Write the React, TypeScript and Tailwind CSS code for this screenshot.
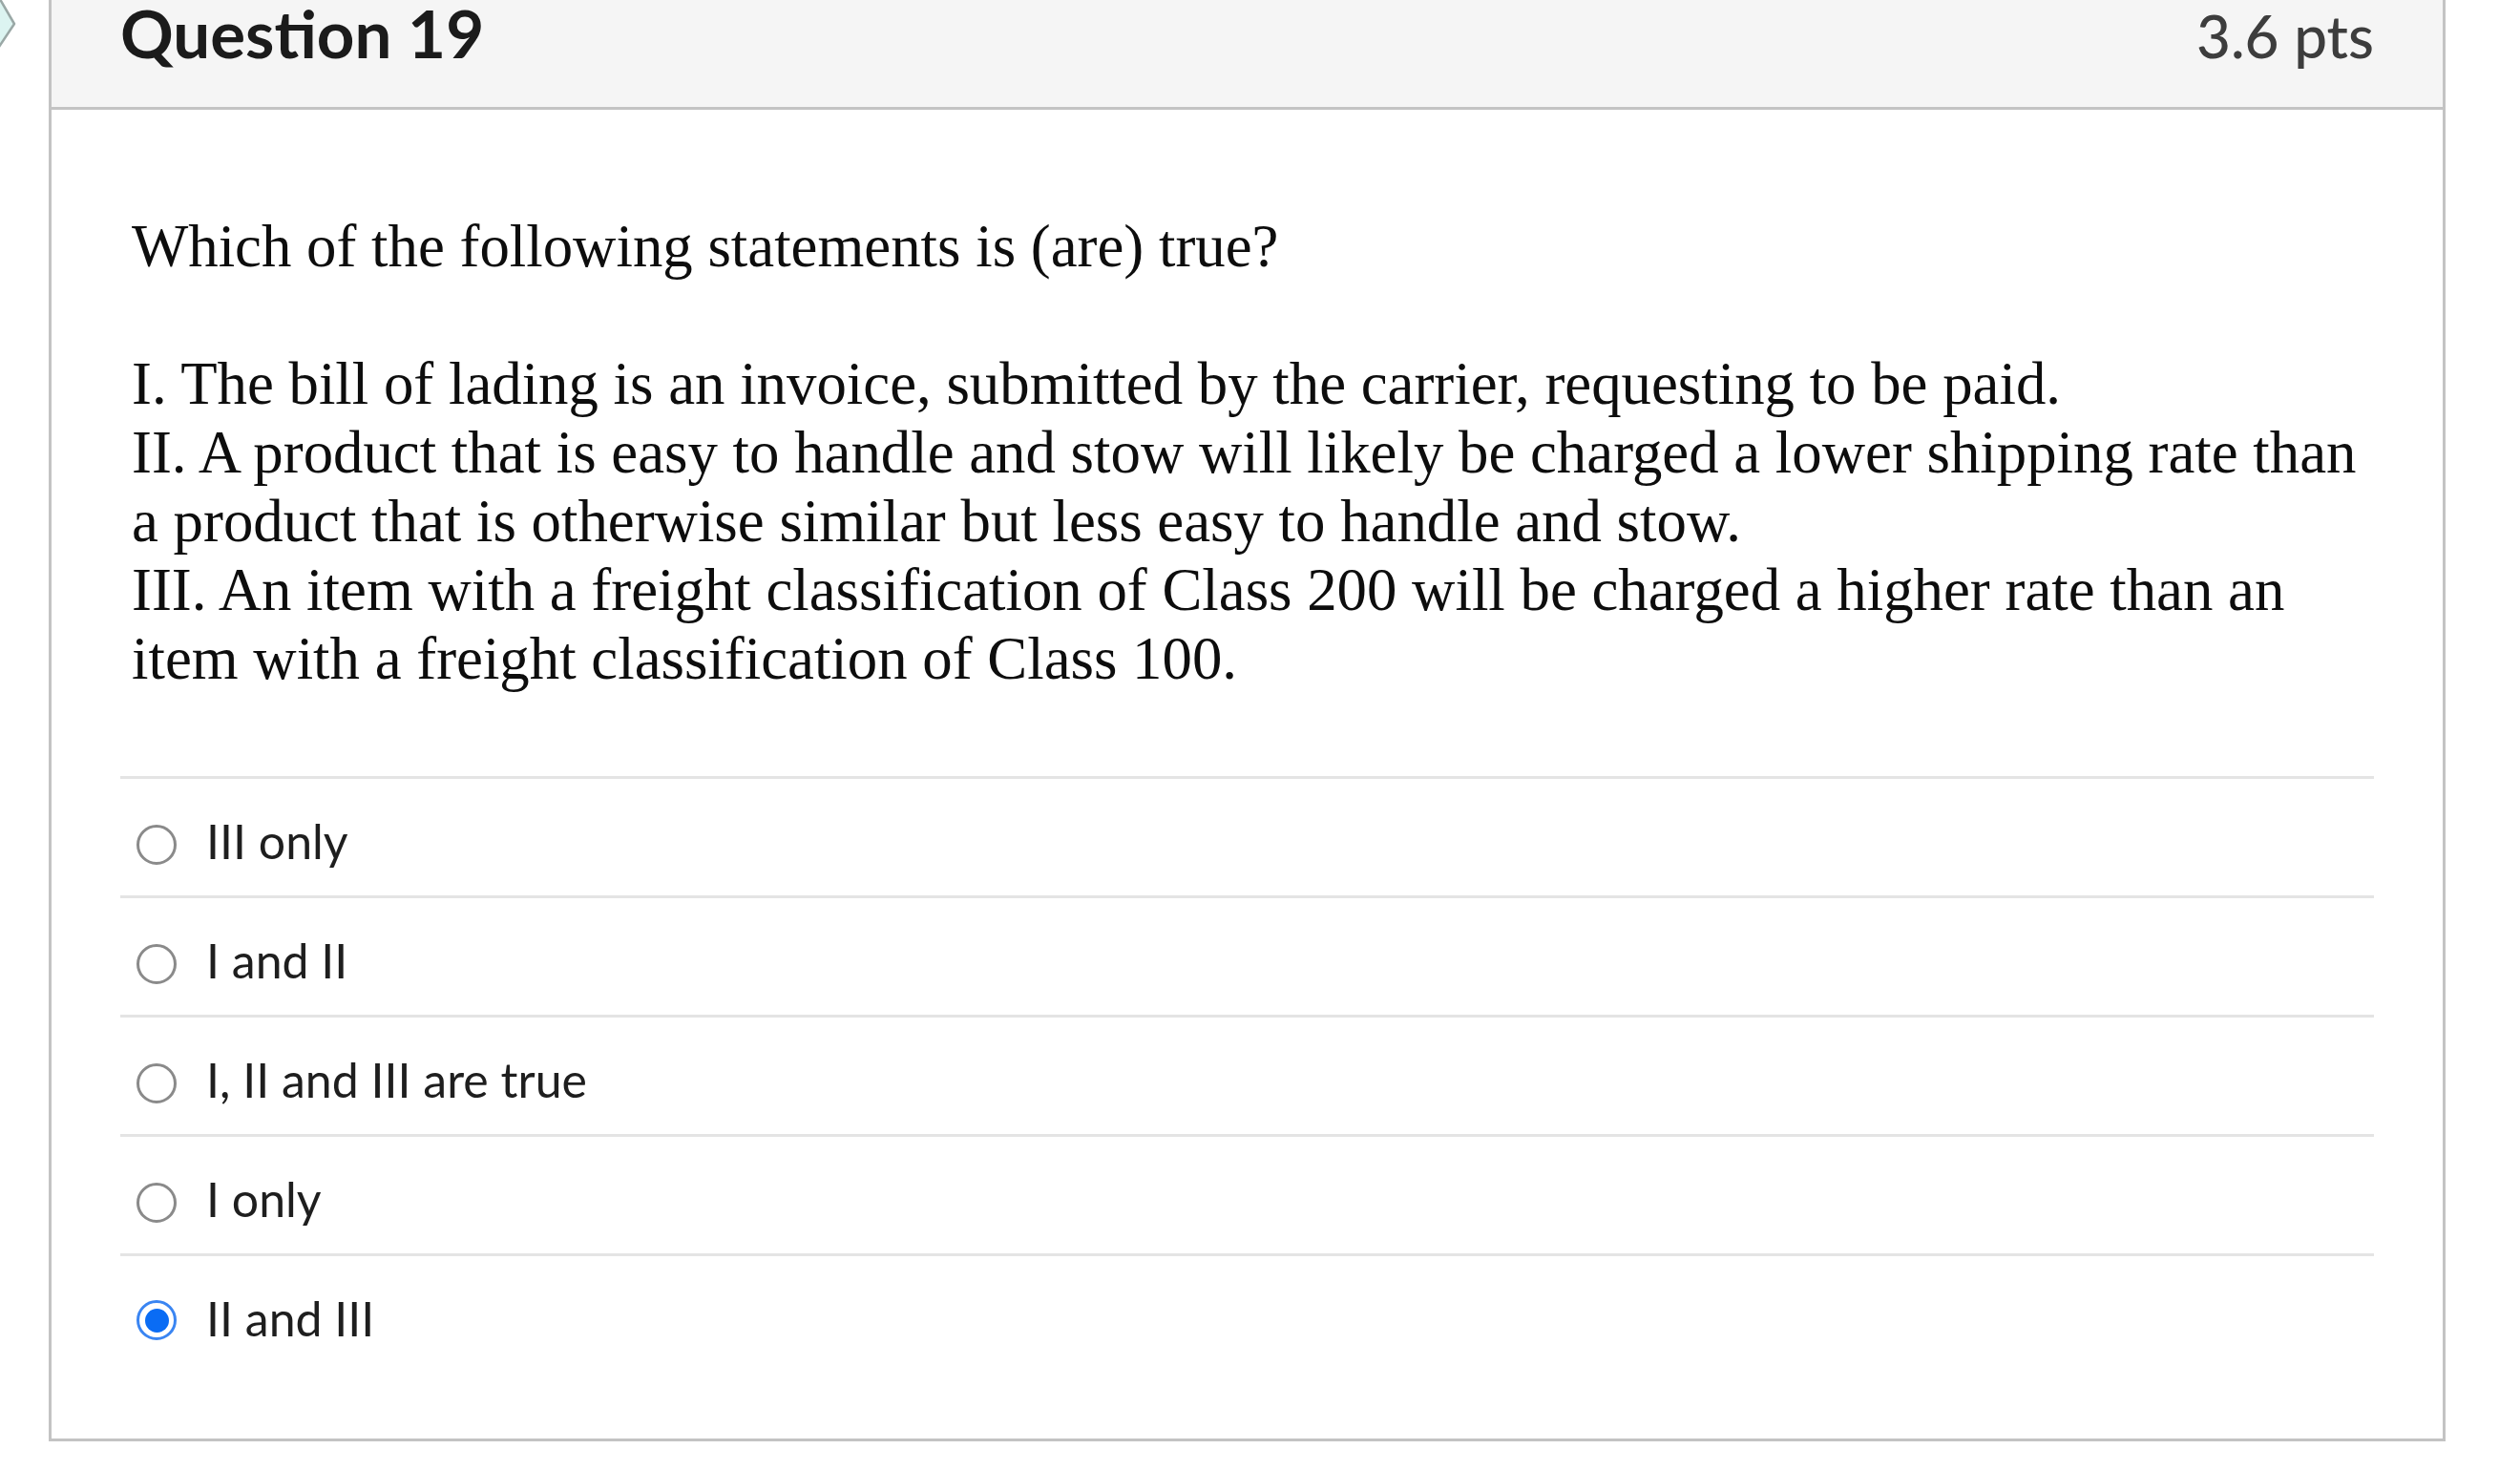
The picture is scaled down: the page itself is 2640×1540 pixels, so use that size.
export default function App() {
  const options = ["III only", "I and II", "I, II and III are true", "I only", "II and III"];
  const selected = 4;
  const lato = { fontFamily: "Lato, 'Open Sans', sans-serif" };
  const serif = { fontFamily: "'Liberation Serif', 'Times New Roman', serif" };
  const lines = [
    "I. The bill of lading is an invoice, submitted by the carrier, requesting to be paid.",
    "II. A product that is easy to handle and stow will likely be charged a lower shipping rate than",
    "a product that is otherwise similar but less easy to handle and stow.",
    "III. An item with a freight classification of Class 200 will be charged a higher rate than an",
    "item with a freight classification of Class 100.",
  ];
  return (
    <div className="w-[2640px] h-[1540px] bg-white flex overflow-hidden">
      <div className="w-[51px] shrink-0">
        <svg width="24" height="60" viewBox="0 0 24 60">
          <polygon
            points="-3,-6 15,25 -3,52"
            fill="#dcf4f1"
            stroke="#9aa8a6"
            strokeWidth="2.5"
            strokeLinejoin="round"
          />
        </svg>
      </div>
      <div className="w-[2511px] h-[1510px] shrink-0 border-l-[3px] border-r-[3px] border-b-[3px] border-[#c3c3c3] flex flex-col">
        <div
          className="h-[115px] shrink-0 bg-[#f5f5f5] border-b-[3px] border-[#c3c3c3] flex justify-between items-baseline px-[72px]"
          style={lato}
        >
          <span className="text-[69px] font-bold leading-none text-[#1b1b1b]">Question 19</span>
          <span className="text-[62px] leading-none text-[#3d3d3d] font-medium">3.6 pts</span>
        </div>
        <div className="flex-1 px-[72px] pt-[107px]">
          <div className="pl-[12px] text-[62.8px] leading-[72px] text-[#0d0d0d]" style={serif}>
            <p className="whitespace-nowrap">Which of the following statements is (are) true?</p>
            <div className="mt-[72px]">
              {lines.map((l, i) => (
                <p key={i} className="whitespace-nowrap">
                  {l}
                </p>
              ))}
            </div>
          </div>
          <div className="mt-[87px]" style={lato}>
            {options.map((o, i) => (
              <div key={i} className="h-[125px] border-t-[3px] border-[#e4e4e4] flex items-start">
                {i === selected ? (
                  <div className="ml-[17px] mt-[46px] w-[42px] h-[42px] shrink-0 rounded-full border-[3px] border-[#3a85f2] bg-white flex items-center justify-center">
                    <div className="w-[25px] h-[25px] rounded-full bg-[#0a6cf4]" />
                  </div>
                ) : (
                  <div className="ml-[17px] mt-[48px] w-[42px] h-[42px] shrink-0 rounded-full border-[3px] border-[#8a8a8a] bg-white" />
                )}
                <span className="ml-[31px] mt-[40px] text-[50px] leading-none text-[#1e1e1e] whitespace-nowrap">
                  {o}
                </span>
              </div>
            ))}
          </div>
        </div>
      </div>
    </div>
  );
}
